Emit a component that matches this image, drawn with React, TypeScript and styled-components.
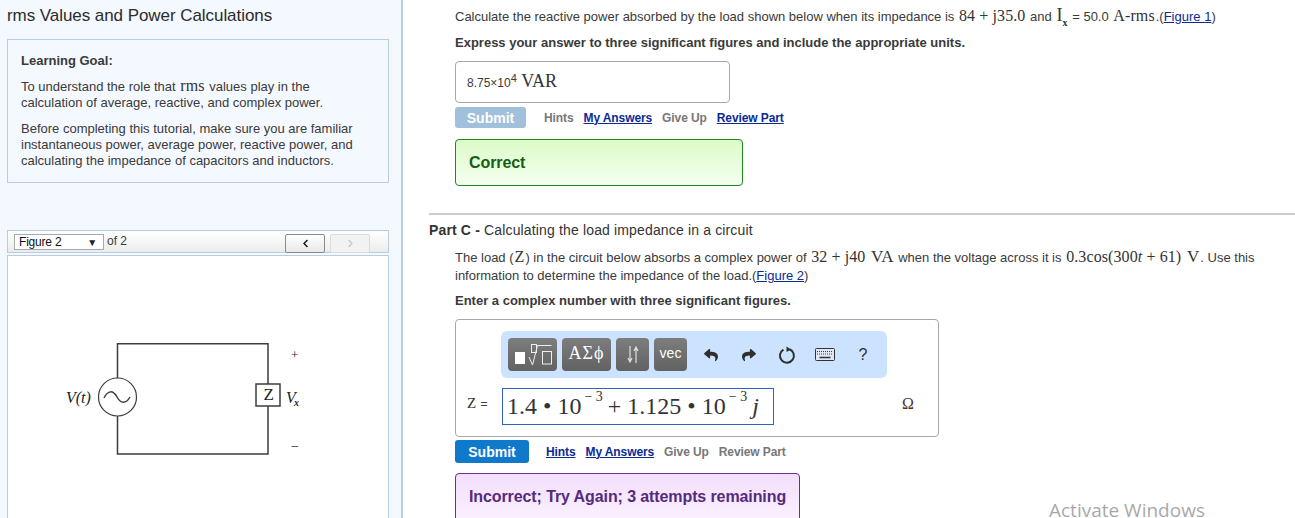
import React from "react";
import styled, { createGlobalStyle } from "styled-components";
import { FaChevronLeft, FaChevronRight, FaReply, FaShare } from "react-icons/fa";

const GlobalStyle = createGlobalStyle`
  html, body {
    margin: 0;
    padding: 0;
    height: 100%;
    overflow: hidden;
    background: #fff;
  }
  body {
    font-family: "Liberation Sans", Arial, sans-serif;
    font-size: 13px;
    color: #3a3a3a;
  }
`;

const Page = styled.div`
  width: 1295px;
  height: 518px;
  display: flex;
  overflow: hidden;
  position: relative;
`;

const Sidebar = styled.aside`
  width: 403px;
  flex-shrink: 0;
  box-sizing: border-box;
  height: 518px;
  background: #f4f8ff;
  border-right: 2px solid #b9cde2;
  padding: 6px 12px 0 7px;
  display: flex;
  flex-direction: column;
`;

const Title = styled.h1`
  margin: 0;
  height: 33px;
  font-size: 17px;
  letter-spacing: -0.06px;
  line-height: 19px;
  font-weight: 400;
  color: #2b2b2b;
  white-space: nowrap;
`;

const GoalBox = styled.div`
  box-sizing: border-box;
  height: 144px;
  border: 1px solid #b9cde2;
  padding: 13px 13px 0 13px;
  margin-bottom: 47px;
  line-height: 16px;
`;

const GoalTitle = styled.div`
  font-weight: 700;
  margin-bottom: 10px;
`;

const GoalText = styled.p`
  margin: 0 0 10px;
  white-space: nowrap;
`;

const Mathy = styled.span<{ $size?: number }>`
  font-family: "Liberation Serif", "DejaVu Serif", serif;
  font-size: ${(p) => p.$size ?? 16}px;
  letter-spacing: 0.1px;
  margin: 0 1px;
  line-height: 0;
  color: #333;
`;

const MathSub = styled.sub`
  font-size: 10px;
  font-weight: 700;
  line-height: 0;
`;

const FigureBar = styled.div`
  box-sizing: border-box;
  flex-shrink: 0;
  height: 23px;
  border: 1px solid #b9cde2;
  background: linear-gradient(#ffffff, #ececec);
  display: flex;
  align-items: flex-start;
  padding: 3px 0 0 6px;
  margin-bottom: 2px;
  font-size: 12px;
`;

const SelectBox = styled.div`
  box-sizing: border-box;
  width: 90px;
  height: 16px;
  border: 1px solid #a9a9a9;
  background: #fff;
  display: flex;
  align-items: center;
  justify-content: space-between;
  padding: 0 6px 0 4px;
  color: #111;
  letter-spacing: -0.2px;
`;

const Caret = styled.span`
  font-size: 10px;
  color: #222;
`;

const OfLabel = styled.span`
  margin-left: 3px;
  line-height: 15px;
  flex: 1;
`;

const NavButton = styled.div<{ $disabled?: boolean }>`
  box-sizing: border-box;
  width: 40px;
  height: 19px;
  margin-right: 5px;
  border: 1px solid ${(p) => (p.$disabled ? "#dcdcdc" : "#8a8a8a")};
  border-radius: 2px;
  background: ${(p) => (p.$disabled ? "#f2f2f2" : "linear-gradient(#ffffff, #e8e8e8)")};
  color: ${(p) => (p.$disabled ? "#c8c8c8" : "#111")};
  font-size: 9px;
  display: flex;
  align-items: center;
  justify-content: center;
  &:last-child {
    margin-right: 18px;
  }
`;

const FigureBox = styled.div`
  flex: 1;
  min-height: 0;
  overflow: hidden;
  border: 1px solid #b9cde2;
  border-bottom: none;
  background: #fff;
`;

const CircuitSvg = styled.svg`
  display: block;
`;

const Main = styled.main`
  flex: 1;
  min-width: 0;
  display: flex;
  flex-direction: column;
  padding-top: 8px;
`;

const Indented = styled.div`
  flex-shrink: 0;
  padding-left: 52px;
  display: flex;
  flex-direction: column;
  align-items: flex-start;
`;

const TextLine = styled.div<{ $mb?: number }>`
  line-height: 18px;
  margin-bottom: ${(p) => p.$mb ?? 0}px;
  white-space: nowrap;
`;

const Strong = styled.div<{ $mb: number }>`
  line-height: 18px;
  font-weight: 700;
  margin-bottom: ${(p) => p.$mb}px;
  white-space: nowrap;
`;

const Link = styled.a`
  color: #0b2a94;
  text-decoration: underline;
`;

const AnswerBox = styled.div`
  box-sizing: border-box;
  width: 275px;
  height: 42px;
  border: 1px solid #a8a8a8;
  border-radius: 4px;
  display: flex;
  align-items: center;
  padding: 1px 0 0 11px;
  margin-bottom: 4px;
  font-size: 12px;
`;

const Sup = styled.sup`
  font-size: 11px;
  line-height: 0;
`;

const ActionRow = styled.div<{ $mb: number }>`
  display: flex;
  align-items: center;
  margin-bottom: ${(p) => p.$mb}px;
  font-size: 12px;
`;

const SubmitButton = styled.div<{ $muted?: boolean }>`
  box-sizing: border-box;
  height: ${(p) => (p.$muted ? 21 : 23)}px;
  width: ${(p) => (p.$muted ? 71 : 74)}px;
  border-radius: 3px;
  background: ${(p) => (p.$muted ? "#a0c0dc" : "#0f79cc")};
  color: #fff;
  font-weight: 700;
  font-size: 14px;
  display: flex;
  align-items: center;
  justify-content: center;
  margin-right: ${(p) => (p.$muted ? 18 : 17)}px;
`;

const ActionLink = styled.a<{ $on?: boolean }>`
  font-weight: 700;
  margin-right: 10px;
  letter-spacing: -0.1px;
  color: ${(p) => (p.$on ? "#0b2a94" : "#777")};
  text-decoration: ${(p) => (p.$on ? "underline" : "none")};
`;

const Feedback = styled.div<{ $ok?: boolean }>`
  box-sizing: border-box;
  font-size: 16px;
  font-weight: 700;
  letter-spacing: -0.1px;
  border-radius: 4px;
  display: flex;
  border: 1px solid ${(p) => (p.$ok ? "#1c8a1c" : "#6a2d91")};
  color: ${(p) => (p.$ok ? "#145f14" : "#552a7d")};
  background: ${(p) =>
    p.$ok ? "linear-gradient(#dcfbc8, #f4fff0)" : "linear-gradient(#f3defc, #fdf6ff)"};
  width: ${(p) => (p.$ok ? 288 : 345)}px;
  height: ${(p) => (p.$ok ? 47 : 60)}px;
  padding-left: 13px;
  align-items: ${(p) => (p.$ok ? "center" : "flex-start")};
  padding-top: ${(p) => (p.$ok ? 0 : 14)}px;
`;

const Divider = styled.hr`
  flex-shrink: 0;
  border: 0;
  height: 2px;
  background: #ccc;
  margin: 27px 0 6px 26px;
`;

const PartHeading = styled.div`
  flex-shrink: 0;
  margin-left: 26px;
  font-size: 14px;
  letter-spacing: 0.15px;
  line-height: 18px;
  margin-bottom: 10px;
  color: #333;
`;

const PartLabel = styled.span`
  font-weight: 700;
`;

const EditorBox = styled.div`
  box-sizing: border-box;
  width: 484px;
  height: 118px;
  border: 1px solid #a8a8a8;
  border-radius: 4px;
  padding: 11px 0 0 10px;
  margin-bottom: 3px;
`;

const Toolbar = styled.div`
  box-sizing: border-box;
  width: 386px;
  height: 47px;
  margin-left: 35px;
  margin-bottom: 10px;
  background: #cce3ff;
  border-radius: 6px;
  padding: 7px 0 0 7px;
  display: flex;
  align-items: flex-start;
`;

const ToolButton = styled.div<{ $w: number }>`
  box-sizing: border-box;
  flex-shrink: 0;
  width: ${(p) => p.$w}px;
  height: 33px;
  margin-right: 5px;
  border-radius: 4px;
  background: linear-gradient(#7d7d7d, #626262);
  color: #fff;
  display: flex;
  align-items: center;
  justify-content: center;
`;

const ToolText = styled.span<{ $serif?: boolean }>`
  font-family: ${(p) => (p.$serif ? '"Liberation Serif", serif' : '"Liberation Sans", sans-serif')};
  font-size: ${(p) => (p.$serif ? 18 : 14)}px;
  letter-spacing: ${(p) => (p.$serif ? 1 : 0)}px;
  margin-top: -3px;
`;

const ToolIcon = styled.div`
  flex-shrink: 0;
  width: 38px;
  height: 33px;
  display: flex;
  align-items: center;
  justify-content: center;
  color: #2f2f2f;
  font-size: 14px;
`;

const HelpMark = styled.span`
  font-size: 16px;
`;

const InputRow = styled.div`
  display: flex;
  align-items: center;
`;

const ZLabel = styled.div`
  width: 36px;
  box-sizing: border-box;
  font-size: 12px;
  margin-bottom: 6px;
`;

const ZInput = styled.div`
  box-sizing: border-box;
  width: 272px;
  height: 37px;
  border: 1px solid #2f62c4;
  padding-left: 4px;
  display: flex;
  align-items: center;
  font-family: "Liberation Serif", serif;
  font-size: 24px;
  color: #333;
  white-space: pre;
`;

const Exp = styled.span`
  font-size: 14px;
  line-height: 0;
  margin: 0 5px 0 3px;
  position: relative;
  top: -10px;
`;

const Unit = styled.div`
  margin: 0 0 6px 128px;
  font-family: "Liberation Serif", serif;
  font-size: 16px;
`;

const Watermark = styled.div`
  position: absolute;
  left: 1049px;
  top: 502px;
  font-family: "Open Sans", sans-serif;
  font-size: 19px;
  line-height: 16px;
  color: #a9a9a9;
`;

const Circuit = () => (
  <CircuitSvg width="380" height="263" viewBox="8 256 380 263">
    <g fill="none" stroke="#3c3c3c" strokeWidth="1.5">
      <path d="M117.5 378V343.7H268V384M268 406V454H117.5V416" />
      <circle cx="117.5" cy="397" r="19" strokeWidth="1.2" />
      <path d="M104 398c4-8 9-8 13-1s9 7 13 0" strokeWidth="1.5" />
      <rect x="256" y="384" width="24" height="22" fill="#fff" />
    </g>
    <g fontFamily="Liberation Serif, serif" fill="#222">
      <text x="66" y="403" fontSize="16" fontStyle="italic">V(t)</text>
      <text x="263.5" y="400" fontSize="17">Z</text>
      <text x="286" y="403" fontSize="16" fontStyle="italic">V</text>
      <text x="294" y="406" fontSize="10" fontStyle="italic" fontWeight="700">x</text>
      <text x="291" y="359" fontSize="13">+</text>
      <text x="291" y="451" fontSize="14">−</text>
    </g>
  </CircuitSvg>
);

const RadicalIcon = () => (
  <svg width="49" height="33" viewBox="0 0 49 33" fill="none">
    <rect x="7" y="14" width="10" height="12" fill="#fff" />
    <rect x="23.5" y="6.5" width="5" height="8" stroke="#eee" />
    <path d="M21 19l3.5 8 5-19.5h14" stroke="#eee" />
    <rect x="34.5" y="13.5" width="9" height="12.5" stroke="#eee" />
  </svg>
);

const SwapIcon = () => (
  <svg width="12" height="17" viewBox="0 0 12 17" fill="none" stroke="#dedede" strokeWidth="1.2">
    <path d="M3 0v16M1 12l2 4 2-4" />
    <path d="M9 17V1M7 5l2-4 2 4" />
  </svg>
);

const KeyboardIcon = () => (
  <svg width="20" height="13" viewBox="0 0 20 13" fill="none">
    <rect x="0.5" y="0.5" width="19" height="12" rx="1" stroke="#333" fill="#dfe8f2" />
    <path d="M2 3.5h16M2 6h16" stroke="#444" strokeDasharray="1 1" />
    <path d="M4.5 9.5h11" stroke="#333" strokeWidth="1.5" />
  </svg>
);

const RedoCircle = () => (
  <svg width="18" height="18" viewBox="0 0 18 18" fill="none">
    <path d="M11.5 3.2A7 7 0 1 1 5.5 3.6" stroke="#2f2f2f" strokeWidth="2" />
    <path d="M8.5 0.5l4.5 3-4.5 2.5z" fill="#2f2f2f" />
  </svg>
);

export default function App() {
  return (
    <Page>
      <GlobalStyle />
      <Sidebar>
        <Title>rms Values and Power Calculations</Title>
        <GoalBox>
          <GoalTitle>Learning Goal:</GoalTitle>
          <GoalText>
            To understand the role that <Mathy>rms</Mathy> values play in the
            <br />
            calculation of average, reactive, and complex power.
          </GoalText>
          <GoalText>
            Before completing this tutorial, make sure you are familiar
            <br />
            instantaneous power, average power, reactive power, and
            <br />
            calculating the impedance of capacitors and inductors.
          </GoalText>
        </GoalBox>
        <FigureBar>
          <SelectBox>
            Figure 2<Caret>▼</Caret>
          </SelectBox>
          <OfLabel>of 2</OfLabel>
          <NavButton>
            <FaChevronLeft />
          </NavButton>
          <NavButton $disabled>
            <FaChevronRight />
          </NavButton>
        </FigureBar>
        <FigureBox>
          <Circuit />
        </FigureBox>
      </Sidebar>
      <Main>
        <Indented>
          <TextLine $mb={8}>
            Calculate the reactive power absorbed by the load shown below when its impedance is{" "}
            <Mathy>84 + j35.0</Mathy> and <Mathy $size={18}>I<MathSub>x</MathSub></Mathy> = 50.0 <Mathy>A-rms</Mathy>.(
            <Link>Figure 1</Link>)
          </TextLine>
          <Strong $mb={9}>Express your answer to three significant figures and include the appropriate units.</Strong>
          <AnswerBox>
            <span>
              8.75×10<Sup>4</Sup> <Mathy $size={18}>VAR</Mathy>
            </span>
          </AnswerBox>
          <ActionRow $mb={11}>
            <SubmitButton $muted>Submit</SubmitButton>
            <ActionLink>Hints</ActionLink>
            <ActionLink $on>My Answers</ActionLink>
            <ActionLink>Give Up</ActionLink>
            <ActionLink $on>Review Part</ActionLink>
          </ActionRow>
          <Feedback $ok>Correct</Feedback>
        </Indented>
        <Divider />
        <PartHeading>
          <PartLabel>Part C - </PartLabel>Calculating the load impedance in a circuit
        </PartHeading>
        <Indented>
          <TextLine>
            The load (<Mathy>Z</Mathy>) in the circuit below absorbs a complex power of{" "}
            <Mathy>32 + j40</Mathy> <Mathy $size={17}>VA</Mathy> when the voltage across it is{" "}
            <Mathy>0.3cos(300<i>t</i> + 61)</Mathy> <Mathy $size={17}>V</Mathy>. Use this
          </TextLine>
          <TextLine $mb={7}>
            information to determine the impedance of the load.(<Link>Figure 2</Link>)
          </TextLine>
          <Strong $mb={9}>Enter a complex number with three significant figures.</Strong>
          <EditorBox>
            <Toolbar>
              <ToolButton $w={49}>
                <RadicalIcon />
              </ToolButton>
              <ToolButton $w={49}>
                <ToolText $serif>ΑΣϕ</ToolText>
              </ToolButton>
              <ToolButton $w={33}>
                <SwapIcon />
              </ToolButton>
              <ToolButton $w={33}>
                <ToolText>vec</ToolText>
              </ToolButton>
              <ToolIcon>
                <FaReply />
              </ToolIcon>
              <ToolIcon>
                <FaShare />
              </ToolIcon>
              <ToolIcon>
                <RedoCircle />
              </ToolIcon>
              <ToolIcon>
                <KeyboardIcon />
              </ToolIcon>
              <ToolIcon>
                <HelpMark>?</HelpMark>
              </ToolIcon>
            </Toolbar>
            <InputRow>
              <ZLabel>
                <Mathy $size={15}>Z</Mathy> =
              </ZLabel>
              <ZInput>
                1.4 • 10<Exp>− 3</Exp>+ 1.125 • 10<Exp>− 3</Exp>
                <i>j</i>
              </ZInput>
              <Unit>Ω</Unit>
            </InputRow>
          </EditorBox>
          <ActionRow $mb={10}>
            <SubmitButton>Submit</SubmitButton>
            <ActionLink $on>Hints</ActionLink>
            <ActionLink $on>My Answers</ActionLink>
            <ActionLink>Give Up</ActionLink>
            <ActionLink>Review Part</ActionLink>
          </ActionRow>
          <Feedback>Incorrect; Try Again; 3 attempts remaining</Feedback>
        </Indented>
      </Main>
      <Watermark>Activate Windows</Watermark>
    </Page>
  );
}
